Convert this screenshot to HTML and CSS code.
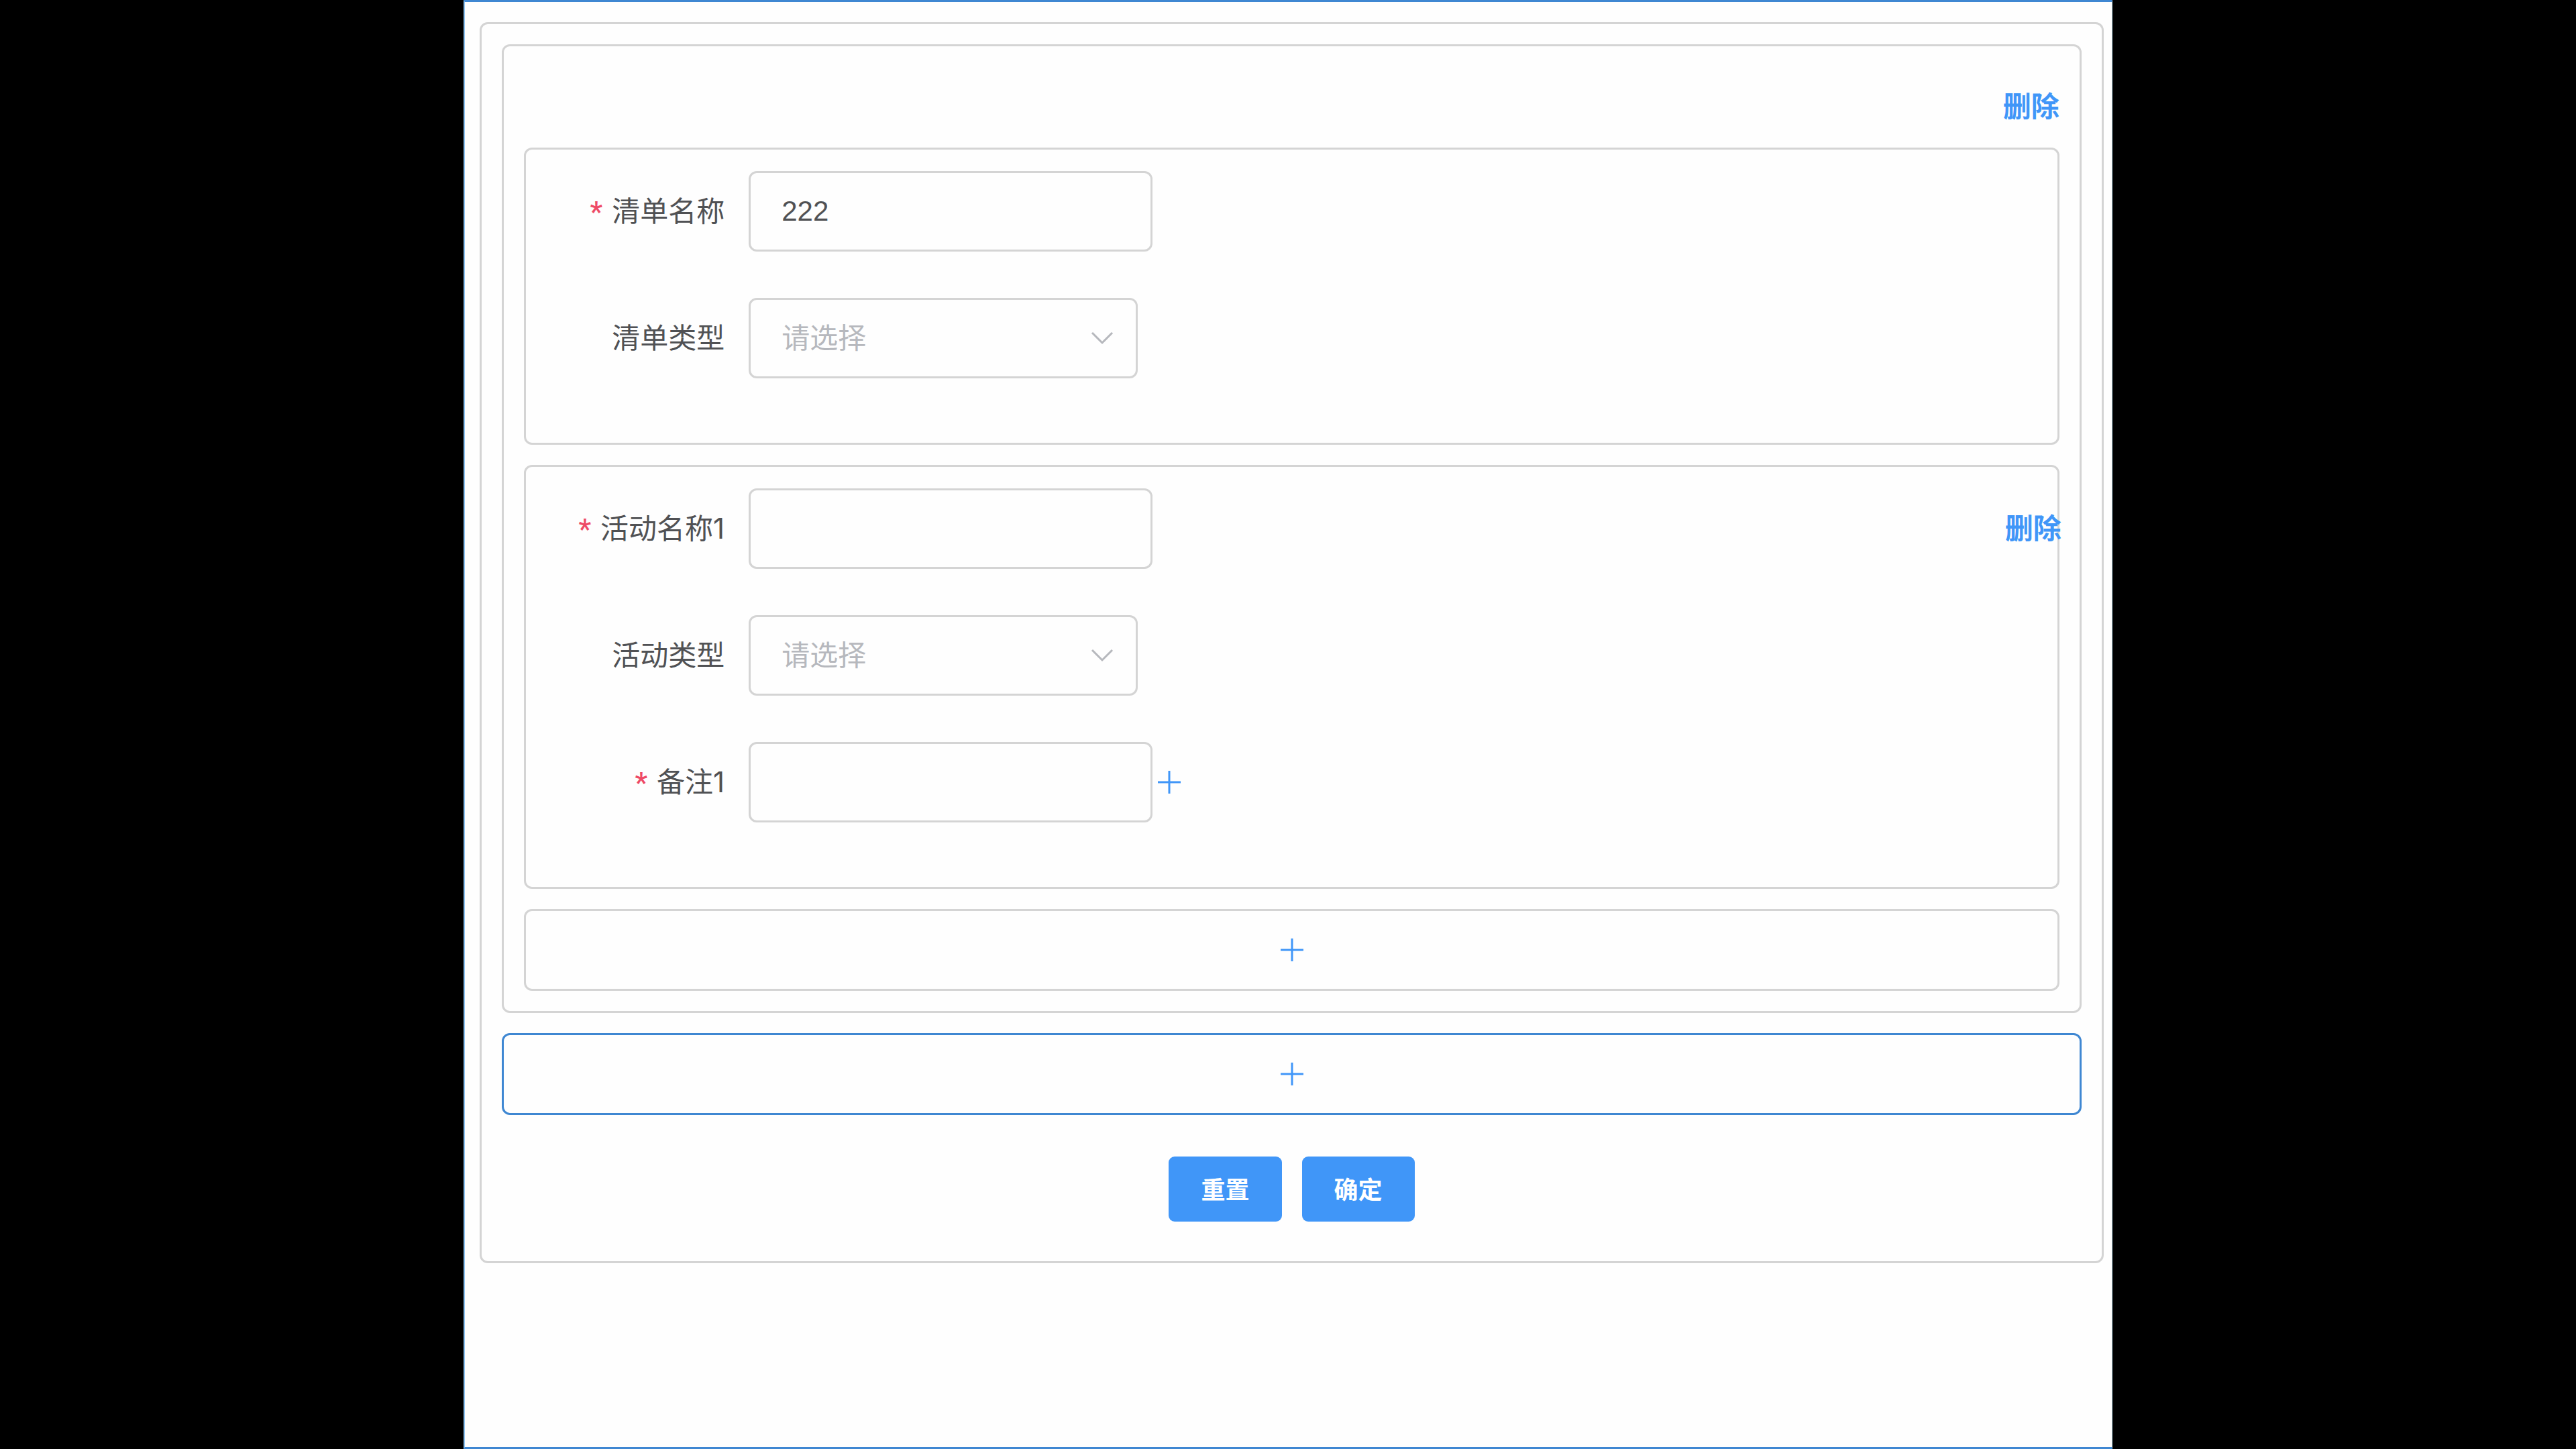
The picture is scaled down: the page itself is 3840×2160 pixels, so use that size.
FILE: index.html
```
<!DOCTYPE html>
<html lang="zh-CN">
<head>
  <meta charset="UTF-8" />
  <meta name="viewport" content="width=device-width, initial-scale=1" />
  <title>清单</title>
  <link rel="stylesheet" href="styles.css">
</head>
<body>
  <div class="page">
    <form class="box" onsubmit="return false">
      <div class="box">
        <div class="box-header">
          <button type="button" class="text-btn">删除</button>
        </div>

        <div class="box form-box">
          <div class="form-item">
            <label class="required" for="listName">清单名称</label>
            <input id="listName" type="text" value="222">
          </div>
          <div class="form-item">
            <label for="listType">清单类型</label>
            <div class="select">
              <select id="listType">
                <option value="">请选择</option>
              </select>
              <svg class="arrow" viewBox="0 0 34 20"><path d="M2 2L17 17L32 2" /></svg>
            </div>
          </div>
        </div>

        <div class="box form-box">
          <button type="button" class="text-btn remove">删除</button>
          <div class="form-item">
            <label class="required" for="actName">活动名称1</label>
            <input id="actName" type="text">
          </div>
          <div class="form-item">
            <label for="actType">活动类型</label>
            <div class="select">
              <select id="actType">
                <option value="">请选择</option>
              </select>
              <svg class="arrow" viewBox="0 0 34 20"><path d="M2 2L17 17L32 2" /></svg>
            </div>
          </div>
          <div class="form-item">
            <label class="required" for="remark">备注1</label>
            <input id="remark" type="text">
            <button type="button" class="icon-btn" aria-label="添加备注">
              <svg class="plus" viewBox="0 0 34 34"><path d="M17 0V34M0 17H34" /></svg>
            </button>
          </div>
        </div>

        <button type="button" class="add-btn" aria-label="添加活动">
          <svg class="plus" viewBox="0 0 34 34"><path d="M17 0V34M0 17H34" /></svg>
        </button>
      </div>

      <button type="button" class="add-btn active" aria-label="添加清单">
        <svg class="plus" viewBox="0 0 34 34"><path d="M17 0V34M0 17H34" /></svg>
      </button>

      <div class="footer">
        <button type="reset" class="btn">重置</button>
        <button type="submit" class="btn">确定</button>
      </div>
    </form>
  </div>
</body>
</html>
```
FILE: styles.css
```
:root {
  --primary: #4096f8;
  --line: #3f87d2;
  --border: #d4d4d4;
  --text: #505154;
  --placeholder: #b6b8bd;
  --danger: #ee4a66;
}
* { box-sizing: border-box; }
body {
  margin: 0;
  background: #000;
  color: var(--text);
  font-family: "Liberation Sans", "Noto Sans CJK SC", sans-serif;
  font-size: 42px;
}
button, input, select {
  font: inherit;
  color: inherit;
}
button {
  border: none;
  padding: 0;
  background: none;
  cursor: pointer;
}
.page {
  width: 64%;
  min-height: 100vh;
  margin: 0 auto;
  padding: 30px 12px 30px 22px;
  background: #fefefe;
  border: 3px solid var(--line);
  border-left: 2px solid #8fc4f2;
  border-right: 1px solid #b9dcea;
}
.box {
  display: flex;
  flex-direction: column;
  gap: 30px;
  padding: 30px;
  border: 3px solid var(--border);
  border-radius: 12px;
}
.box-header {
  display: flex;
  justify-content: flex-end;
  height: 112px;
  margin-bottom: -21px;
}
.text-btn {
  color: var(--primary);
  font-weight: bold;
}
.form-box {
  position: relative;
  gap: 69px;
  padding: 32px 32px 96px;
}
.remove {
  position: absolute;
  top: 32px;
  right: -6px;
  height: 112px;
}
.form-item {
  display: flex;
  align-items: center;
}
.form-item label {
  width: 300px;
  padding-right: 36px;
  text-align: right;
  font-family: Inter, "Noto Sans CJK SC", sans-serif;
  line-height: 60px;
}
.required::before {
  content: "*";
  margin-right: 14px;
  color: var(--danger);
  font-family: Roboto, sans-serif;
  font-weight: 500;
}
input, select {
  height: 120px;
  padding: 0 46px;
  border: 3px solid var(--border);
  border-radius: 12px;
  background: #fefefe;
  outline: none;
}
input { width: 602px; }
select {
  width: 580px;
  appearance: none;
  color: var(--placeholder);
}
.select {
  position: relative;
  display: flex;
}
.arrow {
  position: absolute;
  top: 50px;
  right: 36px;
  width: 34px;
  height: 20px;
  fill: none;
  stroke: var(--placeholder);
  stroke-width: 3;
  pointer-events: none;
}
.plus {
  display: block;
  width: 34px;
  height: 34px;
  fill: none;
  stroke: var(--primary);
  stroke-width: 3;
}
.icon-btn { margin-left: 8px; }
.add-btn {
  display: flex;
  align-items: center;
  justify-content: center;
  height: 122px;
  border: 3px solid var(--border);
  border-radius: 12px;
}
.add-btn.active { border-color: var(--line); }
.footer {
  display: flex;
  justify-content: center;
  gap: 30px;
  padding: 32px 0 29px;
}
.btn {
  height: 97px;
  padding: 0 48px 4px;
  border-radius: 9px;
  background: var(--primary);
  color: #fff;
  font-size: 36px;
  font-weight: bold;
}
```
